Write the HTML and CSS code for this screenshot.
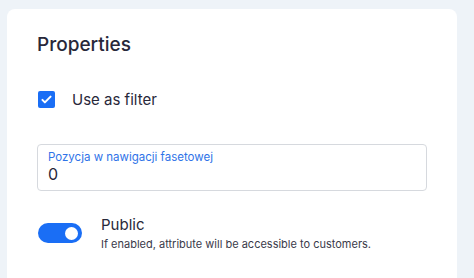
FILE: index.html
```html
<!DOCTYPE html>
<html lang="en">
<head>
  <meta charset="UTF-8">
  <title>Properties</title>
  <link rel="stylesheet" href="styles.css">
</head>
<body>

  <div class="card">
    <h2>Properties</h2>

    <label class="check-row">
      <span class="checkbox">
        <svg viewBox="0 0 16 16" width="13" height="13"><path d="M3 8.5l3 3 7-7" fill="none" stroke="#fff" stroke-width="2.5" stroke-linecap="round" stroke-linejoin="round"/></svg>
      </span>
      Use as filter
    </label>

    <div class="field">
      <label for="position">Pozycja w nawigacji fasetowej</label>
      <input type="text" id="position" value="0">
    </div>

    <div class="switch-row">
      <span class="switch"><span class="knob"></span></span>
      <div>
        <div class="switch-title">Public</div>
        <div class="switch-help">If enabled, attribute will be accessible to customers.</div>
      </div>
    </div>
  </div>

</body>
</html>
```

FILE: styles.css
```css
* { box-sizing: border-box; }
body { margin: 0; background: #eef3f8; font-family: Inter, "Noto Sans", sans-serif; color: #28283a; height: 278px; overflow: hidden; }
.card { background: #fff; margin: 9px 17px 0 7px; border-radius: 8px 8px 0 0; padding: 21px 30px 0; height: 269px; }
h2 { margin: 0 0 30px; font-size: 19px; font-weight: 500; line-height: 30px; }
.check-row { display: flex; align-items: center; gap: 17px; font-size: 15px; margin-left: 1px; }
.checkbox { width: 17px; height: 17px; background: #1a6ef5; border-radius: 2px; display: flex; align-items: center; justify-content: center; }
.field { margin-top: 35px; border: 1px solid #d6d9de; border-radius: 4px; padding: 6px 10px 0; height: 47px; }
.field label { display: block; font-size: 11.5px; color: #2f73e8; line-height: 13px; }
.field input { border: none; outline: none; padding: 0; font: inherit; font-size: 16px; color: #28283a; line-height: 18px; margin-top: -1px; width: 100%; }
.switch-row { display: flex; gap: 19px; margin-top: 25px; }
.switch { width: 44px; height: 20px; background: #1a6ef5; border-radius: 10px; margin-top: 7px; margin-left: 1px; position: relative; flex-shrink: 0; }
.knob { position: absolute; right: 4px; top: 3.5px; width: 13px; height: 13px; background: #fff; border-radius: 50%; }
.switch-title { font-size: 15px; line-height: 18px; }
.switch-help { font-size: 11px; color: #3a3a4a; margin-top: 3px; }
```
